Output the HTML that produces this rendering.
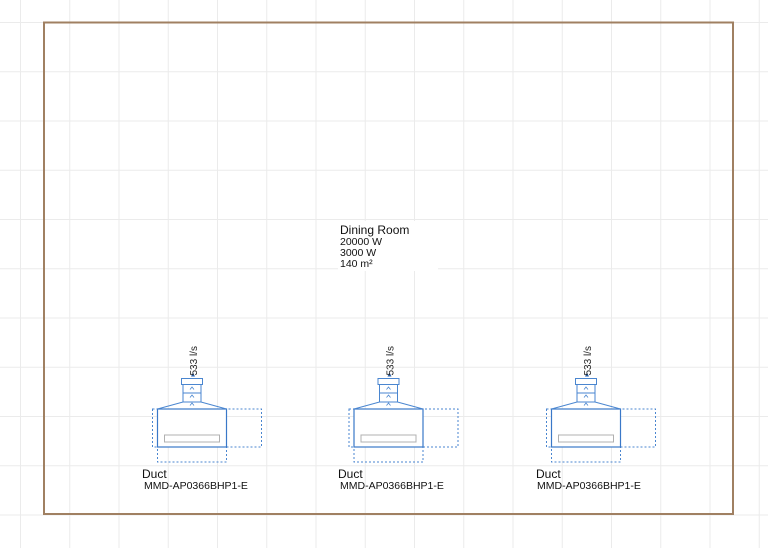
<!DOCTYPE html>
<html><head><meta charset="utf-8"><style>
html,body{margin:0;padding:0;background:#fff;width:768px;height:548px;overflow:hidden}
svg{display:block}
text{font-family:"Liberation Sans",Arial,sans-serif}
</style></head><body>
<svg width="768" height="548" viewBox="0 0 768 548" xmlns="http://www.w3.org/2000/svg">
<defs>
<pattern id="g" x="20" y="22" width="49.25" height="49.25" patternUnits="userSpaceOnUse">
<path d="M0.5 0V49.25M0 0.5H49.25" stroke="#ebebeb" stroke-width="1" fill="none"/>
</pattern>
<g id="u">
<rect x="-4.5" y="0.5" width="109" height="38" fill="none" stroke="#4a86d0" stroke-width="1" stroke-dasharray="2,2"/>
<rect x="0.5" y="38.5" width="69" height="15" fill="none" stroke="#4a86d0" stroke-width="1" stroke-dasharray="2,2"/>
<rect x="0.5" y="0.5" width="69" height="38" fill="#fff" stroke="#3a78c8" stroke-width="1.2"/>
<rect x="7.5" y="26.5" width="55" height="7" fill="none" stroke="#b0b0b0" stroke-width="1"/>
<path d="M0.5 0.5L26 -6.5H44L69.5 0.5" fill="none" stroke="#4a86d0" stroke-width="1"/>
<rect x="26" y="-24" width="18" height="17.5" fill="none" stroke="#4a86d0" stroke-width="1"/>
<path d="M26 -15.5H44" stroke="#4a86d0" stroke-width="1"/>
<rect x="24.5" y="-30" width="21" height="6" fill="none" stroke="#4a86d0" stroke-width="1"/>
<path d="M33 -19l2 -2.5l2 2.5M33 -11l2 -2.5l2 2.5M33 -3l2 -2.5l2 2.5" fill="none" stroke="#4a86d0" stroke-width="0.8"/>
<path d="M34 -32l2 -4l2 4z" fill="#2a5fa8"/>
<text transform="translate(40,-33) rotate(-90)" font-size="10" fill="#222">533 l/s</text>
</g>
</defs>
<rect width="768" height="548" fill="url(#g)"/>
<rect x="44" y="22.5" width="689" height="491.5" fill="none" stroke="#a08062" stroke-width="2"/>
<rect x="338" y="221" width="100" height="50" fill="#fff"/>
<text x="340" y="234" font-size="12" fill="#111">Dining Room</text>
<text x="340" y="245" font-size="10.5" fill="#111">20000 W</text>
<text x="340" y="256" font-size="10.5" fill="#111">3000 W</text>
<text x="340" y="267" font-size="10.5" fill="#111">140 m²</text>
<use href="#u" x="157" y="408.5"/>
<use href="#u" x="353.5" y="408.5"/>
<use href="#u" x="551" y="408.5"/>
<text x="142" y="478" font-size="12" fill="#111">Duct</text>
<text x="144" y="489" font-size="10.5" fill="#111">MMD-AP0366BHP1-E</text>
<text x="338" y="478" font-size="12" fill="#111">Duct</text>
<text x="340" y="489" font-size="10.5" fill="#111">MMD-AP0366BHP1-E</text>
<text x="536" y="478" font-size="12" fill="#111">Duct</text>
<text x="537" y="489" font-size="10.5" fill="#111">MMD-AP0366BHP1-E</text>
</svg>
</body></html>
